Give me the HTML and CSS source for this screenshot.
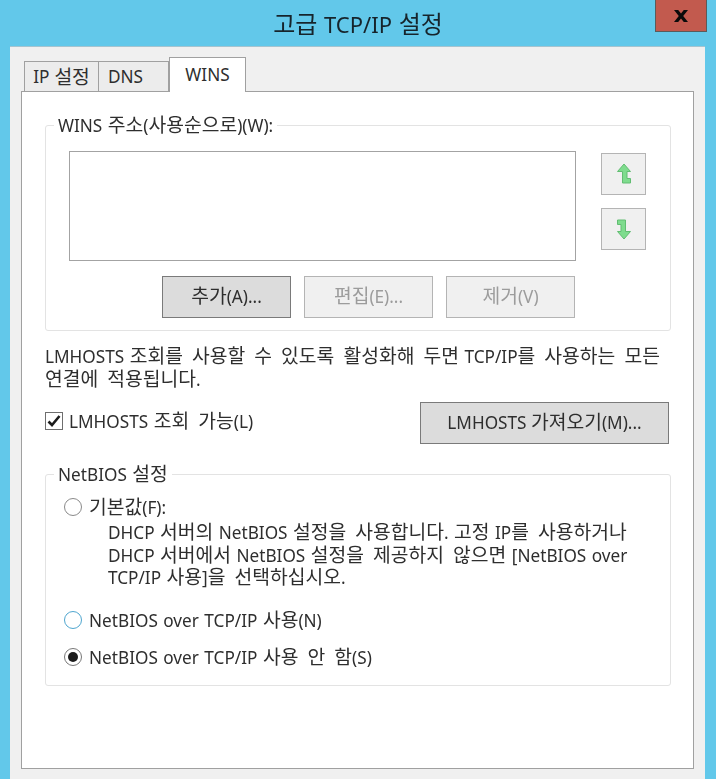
FILE: index.html
```html
<!DOCTYPE html>
<html lang="ko">
<head>
<meta charset="utf-8">
<title>고급 TCP/IP 설정</title>
<link rel="stylesheet" href="styles.css">
</head>
<body>
<div class="dialog">
  <header class="titlebar">
    <h1 class="title"><span class="k">고급</span> TCP/IP <span class="k">설정</span></h1>
    <button class="close" aria-label="닫기">
      <svg width="18" height="14" viewBox="0 0 18 14"><path d="M2 1h4.200L9 4.600 11.800 1H16l-4.800 6 4.800 6h-4.200L9 9.400 6.200 13H2l4.800-6z" fill="#0b0b0b"/></svg>
    </button>
  </header>
  <main class="window">
    <nav class="tabs">
      <div class="tab tab-ip">IP <span class="k">설정</span></div>
      <div class="tab tab-dns">DNS</div>
      <div class="tab tab-active">WINS</div>
    </nav>
    <section class="panel">
      <fieldset class="group group-wins">
        <legend class="legend">WINS <span class="k">주소</span>(<span class="k">사용순으로</span>)(W):</legend>
        <div class="group-body wins-body">
          <div class="list-row">
            <div class="listbox"></div>
            <div class="arrows">
              <button class="arrow">
                <svg width="16" height="24" viewBox="0 0 16 24"><path d="M8 2l6.500 7.500H11V16.500h3.500V21H6.500V9.500H1.500z" fill="#7fdc8e" stroke="#62bd72" stroke-width="1"/></svg>
              </button>
              <button class="arrow">
                <svg width="16" height="24" viewBox="0 0 16 24"><path d="M8 22l-6.500-7.500H5V7.500H1.500V3h8v11.500h5z" fill="#7fdc8e" stroke="#62bd72" stroke-width="1"/></svg>
              </button>
            </div>
          </div>
          <div class="actions">
            <button class="btn btn-default"><span class="k">추가</span>(A)...</button>
            <button class="btn btn-disabled"><span class="k">편집</span>(E)...</button>
            <button class="btn btn-disabled"><span class="k">제거</span>(V)</button>
          </div>
        </div>
      </fieldset>
      <p class="note">LMHOSTS <span class="k">조회를 사용할 수 있도록 활성화해 두면</span> TCP/IP<span class="k">를 사용하는 모든</span><br><span class="k">연결에 적용됩니다</span>.</p>
      <div class="lmhosts-row">
        <div class="check-wrap">
          <span class="checkbox">
            <svg width="16" height="16" viewBox="0 0 16 16"><path d="M2.500 8.500l3.500 3.500 7.500-9" fill="none" stroke="#1c1c1c" stroke-width="2.600"/></svg>
          </span>
          <span class="label">LMHOSTS <span class="k">조회 가능</span>(L)</span>
        </div>
        <button class="btn btn-import">LMHOSTS <span class="k">가져오기</span>(M)...</button>
      </div>
      <fieldset class="group group-netbios">
        <legend class="legend">NetBIOS <span class="k">설정</span></legend>
        <div class="group-body netbios-body">
          <div class="radio-row"><span class="radio"></span><span class="label"><span class="k">기본값</span>(F):</span></div>
          <p class="desc">DHCP <span class="k">서버의</span> NetBIOS <span class="k">설정을 사용합니다</span>. <span class="k">고정</span> IP<span class="k">를 사용하거나</span><br>DHCP <span class="k">서버에서</span> NetBIOS <span class="k">설정을 제공하지 않으면</span> [NetBIOS over<br>TCP/IP <span class="k">사용</span>]<span class="k">을 선택하십시오</span>.</p>
          <div class="radio-row row-use"><span class="radio radio-hover"></span><span class="label">NetBIOS over TCP/IP <span class="k">사용</span>(N)</span></div>
          <div class="radio-row row-off"><span class="radio radio-on"></span><span class="label">NetBIOS over TCP/IP <span class="k">사용 안 함</span>(S)</span></div>
        </div>
      </fieldset>
    </section>
  </main>
</div>
</body>
</html>
```
FILE: styles.css
```css
* { box-sizing: border-box; }
html, body { margin: 0; height: 100%; }
body {
  background: #62c8ea;
  font-family: "Noto Sans", "Noto Sans CJK KR", sans-serif;
  font-size: 17.200px;
  line-height: 22px;
  word-spacing: 1px;
  color: #2e2e2e;
  overflow: hidden;
}
.k { font-family: "Noto Sans CJK KR", sans-serif; font-size: 19.300px; line-height: 1; word-spacing: 3.700px; }
.label { padding-top: 2px; }
.dialog { width: 716px; height: 779px; display: flex; flex-direction: column; position: relative; filter: blur(0.35px); }
.titlebar { height: 46px; flex: none; display: flex; justify-content: center; align-items: flex-start; }
.title { margin: 9px 0 0; font-size: 22px; line-height: 30px; font-weight: 400; color: #16242b; }
.title .k { font-size: 24px; }
.close {
  position: absolute; left: 655px; top: -1px; width: 52px; height: 33px; padding: 0;
  background: #c25a4e; border: 1px solid #5b5b5b;
  display: flex; align-items: center; justify-content: center;
}
.window {
  margin: 0 11px 0 10px; flex: 1; background: #f0f0f0;
  border-top: 1px solid #a5c4d0;
  padding: 10px 11px 0; display: flex; flex-direction: column;
}
.tabs { height: 34px; display: flex; align-items: flex-end; padding-left: 3px; flex: none; position: relative; z-index: 1; }
.tab {
  height: 30px; background: #ececec; border: 1px solid #a0a0a0; border-bottom: 0;
  display: flex; align-items: center; justify-content: center; gap: 5px; color: #2e2e2e;
  white-space: nowrap;
}
.tab-ip { width: 75px; }
.tab-dns { width: 70px; border-left: 0; padding-right: 16px; }
.tab-active { width: 77px; height: 35px; margin-bottom: -1px; background: #fff; }
.panel {
  width: 673px; height: 678px; flex: none; background: #fff; border: 1px solid #a0a0a0;
  padding: 22px 23px 0; display: flex; flex-direction: column;
}
.group { margin: 0; padding: 0; border: 1px solid #e3e3e3; border-radius: 3px; width: 626px; min-width: 0; flex: none; }
.legend { margin-left: 8px; padding: 0 4px; height: 22px; line-height: 24px; }
.group-wins { height: 217px; }
.wins-body { padding: 15px 23px 0; }
.list-row { display: flex; align-items: flex-start; }
.listbox { width: 507px; height: 110px; border: 1px solid #a3a3a3; background: #fff; flex: none; }
.arrows { display: flex; flex-direction: column; gap: 13px; margin: 2px 0 0 25px; }
.arrow {
  width: 45px; height: 42px; padding: 0; background: #f0f0f0; border: 1px solid #b4b4b4;
  display: flex; align-items: center; justify-content: center;
}
.actions { display: flex; gap: 13px; margin: 15px 0 0 93px; }
.btn { font: inherit; height: 42px; width: 129px; padding: 0 0 1px; border: 1px solid #b4b4b4; background: #f0f0f0; color: #2e2e2e; white-space: nowrap; }
.btn-default { border-color: #7a7a7a; background: #dcdcdc; }
.btn-disabled { color: #9c9c9c; }
.note { margin: 15px 0 0; height: 44px; line-height: 22.500px; white-space: nowrap; flex: none; }
.lmhosts-row { display: flex; align-items: flex-start; justify-content: space-between; margin-top: 12px; width: 624px; flex: none; }
.check-wrap { display: flex; align-items: center; gap: 6px; margin-top: 7px; }
.checkbox { width: 18px; height: 18px; border: 1px solid #6e6e6e; background: #fff; display: flex; align-items: center; justify-content: center; }
.btn-import { width: 249px; background: #dcdcdc; border-color: #7a7a7a; }
.group-netbios { height: 223px; margin-top: 19px; }
.netbios-body { padding: 11px 18px 0; }
.radio-row { display: flex; align-items: center; gap: 7px; height: 22px; white-space: nowrap; }
.radio { width: 18px; height: 18px; border-radius: 50%; border: 1.500px solid #8a8a8a; background: #fff; flex: none; }
.radio-hover { border-color: #4fa6cf; }
.radio-on { position: relative; border-color: #777; }
.radio-on::after { content: ""; position: absolute; inset: 3px; border-radius: 50%; background: #1c1c1c; }
.desc { margin: 3px 0 0 44px; height: 68px; padding-top: 1px; line-height: 22.500px; white-space: nowrap; }
.row-use { margin-top: 20px; }
.row-off { margin-top: 15px; }
```
